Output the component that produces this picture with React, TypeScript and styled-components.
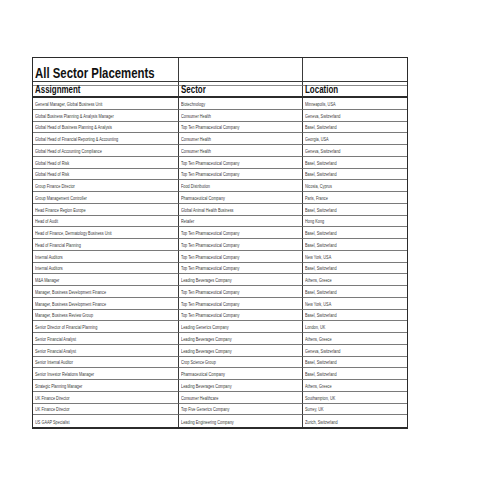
import React from "react";
import styled, { createGlobalStyle } from "styled-components";

const GlobalStyle = createGlobalStyle`
  html, body {
    margin: 0;
    padding: 0;
    background: #ffffff;
  }
  body {
    font-family: "Liberation Sans Narrow", "Arial Narrow", "Liberation Sans", Arial, sans-serif;
    color: #111;
  }
`;

const Page = styled.div`
  width: 495px;
  height: 495px;
  padding: 57px 0 0 32px;
  box-sizing: border-box;
  background: #fff;
`;

const Sheet = styled.div`
  width: 376px;
  border: 1px solid #2b2b2b;
  border-bottom: 2px solid #2b2b2b;
  box-sizing: border-box;
`;

const Grid = styled.div<{ $rows: string }>`
  display: grid;
  grid-template-columns: 146px 124px 1fr;
  grid-template-rows: ${(p) => p.$rows};
`;

const Cell = styled.div<{ $last?: boolean; $line?: string; $pad?: number }>`
  display: flex;
  align-items: flex-end;
  min-width: 0;
  white-space: nowrap;
  padding: 0 0 ${(p) => p.$pad ?? 1}px 2px;
  border-right: ${(p) => (p.$last ? "none" : "1px solid #3a3a3a")};
  border-bottom: ${(p) => p.$line || "1px solid #7a7a7a"};
`;

const Narrow = styled.span`
  display: inline-block;
  transform: scaleX(0.78);
  transform-origin: left bottom;
  line-height: 1;
`;

const Title = styled(Narrow)`
  font-size: 14.6px;
  font-weight: 700;
  color: #111;
`;

const Heading = styled(Narrow)`
  font-size: 10.2px;
  line-height: 1.2;
  font-weight: 700;
  color: #111;
`;

const Text = styled(Narrow)`
  font-size: 4.8px;
  transform: scaleX(0.8);
  color: #3a3a3a;
`;

const rows: [string, string, string][] = [
  ["General Manager, Global Business Unit", "Biotechnology", "Minneapolis, USA"],
  ["Global Business Planning & Analysis Manager", "Consumer Health", "Geneva, Switzerland"],
  ["Global Head of Business Planning & Analysis", "Top Ten Pharmaceutical Company", "Basel, Switzerland"],
  ["Global Head of Financial Reporting & Accounting", "Consumer Health", "Georgia, USA"],
  ["Global Head of Accounting Compliance", "Consumer Health", "Geneva, Switzerland"],
  ["Global Head of Risk", "Top Ten Pharmaceutical Company", "Basel, Switzerland"],
  ["Global Head of Risk", "Top Ten Pharmaceutical Company", "Basel, Switzerland"],
  ["Group Finance Director", "Food Distribution", "Nicosia, Cyprus"],
  ["Group Management Controller", "Pharmaceutical Company", "Paris, France"],
  ["Head Finance Region Europe", "Global Animal Health Business", "Basel, Switzerland"],
  ["Head of Audit", "Retailer", "Hong Kong"],
  ["Head of Finance, Dermatology Business Unit", "Top Ten Pharmaceutical Company", "Basel, Switzerland"],
  ["Head of Financial Planning", "Top Ten Pharmaceutical Company", "Basel, Switzerland"],
  ["Internal Auditors", "Top Ten Pharmaceutical Company", "New York, USA"],
  ["Internal Auditors", "Top Ten Pharmaceutical Company", "Basel, Switzerland"],
  ["M&A Manager", "Leading Beverages Company", "Athens, Greece"],
  ["Manager, Business Development Finance", "Top Ten Pharmaceutical Company", "Basel, Switzerland"],
  ["Manager, Business Development Finance", "Top Ten Pharmaceutical Company", "New York, USA"],
  ["Manager, Business Review Group", "Top Ten Pharmaceutical Company", "Basel, Switzerland"],
  ["Senior Director of Financial Planning", "Leading Generics Company", "London, UK"],
  ["Senior Financial Analyst", "Leading Beverages Company", "Athens, Greece"],
  ["Senior Financial Analyst", "Leading Beverages Company", "Geneva, Switzerland"],
  ["Senior Internal Auditor", "Crop Science Group", "Basel, Switzerland"],
  ["Senior Investor Relations Manager", "Pharmaceutical Company", "Basel, Switzerland"],
  ["Strategic Planning Manager", "Leading Beverages Company", "Athens, Greece"],
  ["UK Finance Director", "Consumer Healthcare", "Southampton, UK"],
  ["UK Finance Director", "Top Five Generics Company", "Surrey, UK"],
  ["US GAAP Specialist", "Leading Engineering Company", "Zurich, Switzerland"],
];

export default function App() {
  return (
    <>
      <GlobalStyle />
      <Page>
        <Sheet>
          <Grid $rows="24px 4px 12px">
            <Cell $line="1px solid #3a3a3a" $pad={0}>
              <Title>All Sector Placements</Title>
            </Cell>
            <Cell $line="1px solid #3a3a3a" />
            <Cell $last $line="1px solid #3a3a3a" />
            <Cell $line="1px solid #8a8a8a" />
            <Cell $line="1px solid #8a8a8a" />
            <Cell $last $line="1px solid #8a8a8a" />
            <Cell $line="2px solid #2b2b2b" $pad={0}>
              <Heading>Assignment</Heading>
            </Cell>
            <Cell $line="2px solid #2b2b2b" $pad={0}>
              <Heading>Sector</Heading>
            </Cell>
            <Cell $last $line="2px solid #2b2b2b" $pad={0}>
              <Heading>Location</Heading>
            </Cell>
          </Grid>
          <Grid $rows={`repeat(${rows.length}, 1fr)`} style={{ height: 329 }}>
            {rows.map((r, i) => {
              const line = i === rows.length - 1 ? "none" : undefined;
              return (
                <React.Fragment key={i}>
                  <Cell $line={line}>
                    <Text>{r[0]}</Text>
                  </Cell>
                  <Cell $line={line}>
                    <Text>{r[1]}</Text>
                  </Cell>
                  <Cell $last $line={line}>
                    <Text>{r[2]}</Text>
                  </Cell>
                </React.Fragment>
              );
            })}
          </Grid>
        </Sheet>
      </Page>
    </>
  );
}
